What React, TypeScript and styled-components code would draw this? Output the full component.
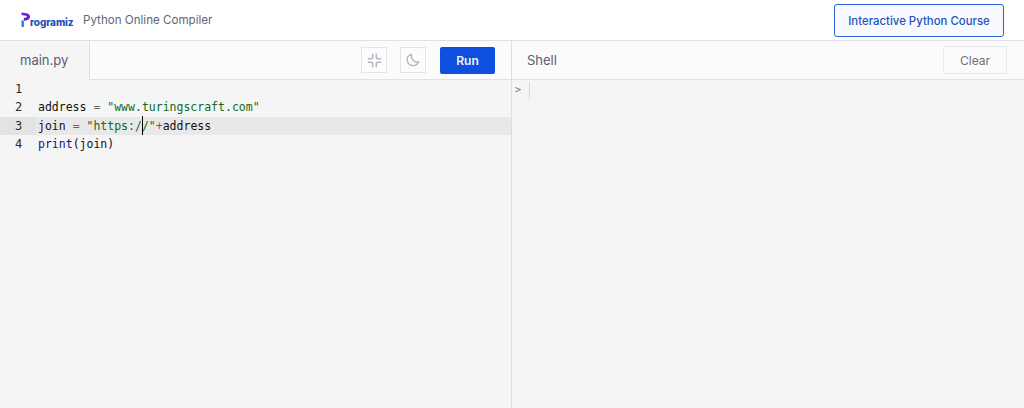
import React, { FunctionComponent } from "react";
import styled, { createGlobalStyle } from "styled-components";

/* Styles */
const GlobalStyle = createGlobalStyle`
  html, body {
    margin: 0;
    padding: 0;
    height: 100%;
    background: #ffffff;
    font-family: "Inter", "Liberation Sans", sans-serif;
  }
  * {
    box-sizing: border-box;
  }
`;

const Page = styled.div`
  width: 1024px;
  height: 408px;
  display: flex;
  flex-direction: column;
  overflow: hidden;
`;

const Header = styled.header`
  height: 41px;
  flex: none;
  display: flex;
  align-items: center;
  justify-content: space-between;
  padding: 0 20px 0 21px;
  background: #ffffff;
  border-bottom: 1px solid #dfe0e8;
`;

const Brand = styled.div`
  display: flex;
  align-items: center;
`;

const Logo = styled.div`
  display: flex;
  align-items: flex-end;
  width: 53px;
  height: 17px;
  margin: 0 9px 2px 0;
`;

const LogoText = styled.span`
  margin-left: -1px;
  font-size: 10px;
  font-weight: 800;
  line-height: 11px;
  letter-spacing: -0.1px;
  color: #2450b4;
`;

const ProductName = styled.span`
  font-size: 11.6px;
  color: #626679;
`;

const CourseButton = styled.button`
  width: 170px;
  height: 33px;
  margin-top: 1px;
  border: 1px solid #2a62d8;
  border-radius: 3px;
  background: #f8faff;
  color: #2353b8;
  font-family: inherit;
  font-size: 11.4px;
  font-weight: 500;
`;

const Panels = styled.main`
  flex: 1;
  display: flex;
  min-height: 0;
`;

const EditorPanel = styled.section`
  width: 512px;
  flex: none;
  display: flex;
  flex-direction: column;
  border-right: 1px solid #dcdce6;
`;

const ShellPanel = styled.section`
  flex: 1;
  display: flex;
  flex-direction: column;
`;

const Toolbar = styled.div`
  height: 39px;
  flex: none;
  display: flex;
  align-items: center;
  background: #fbfbfc;
  border-bottom: 1px solid #dfe0e8;
`;

const FileTab = styled.div`
  width: 90px;
  height: 39px;
  display: flex;
  align-items: center;
  padding: 0 0 1px 20px;
  background: #f5f5f5;
  border-right: 1px solid #dfe0e8;
  font-size: 13px;
  color: #5a5d70;
`;

const Actions = styled.div`
  margin-left: auto;
  display: flex;
  align-items: center;
  gap: 13px;
  padding-right: 16px;
`;

const IconButton = styled.button`
  width: 26px;
  height: 26px;
  display: flex;
  align-items: center;
  justify-content: center;
  padding: 0;
  background: #fcfcfc;
  border: 1px solid #e4e5ea;
  color: #b4b6c1;
`;

const RunButton = styled.button`
  width: 55px;
  height: 27px;
  margin-left: 1px;
  border: none;
  border-radius: 2px;
  background: #0f4fe0;
  color: #f2f5ff;
  font-family: inherit;
  font-size: 12px;
  font-weight: 600;
`;

const ShellTitle = styled.div`
  flex: 1;
  padding: 0 0 1px 15px;
  font-size: 13px;
  color: #5a5d70;
`;

const ClearButton = styled.button`
  width: 64px;
  height: 28px;
  margin-right: 17px;
  background: #fcfcfc;
  border: 1px solid #e8e9ed;
  border-radius: 2px;
  color: #6c6f80;
  font-family: inherit;
  font-size: 12px;
`;

const Code = styled.div`
  flex: 1;
  background: #f5f5f5;
  font-family: "DejaVu Sans Mono", monospace;
  font-size: 11.5px;
`;

const Line = styled.div<{ $active?: boolean }>`
  position: relative;
  display: flex;
  height: 18.3px;
  line-height: 18.3px;
  white-space: pre;
  background: ${(p) => (p.$active ? "#e8e8e8" : "transparent")};
  color: #111111;
`;

const LineNo = styled.span<{ $active?: boolean }>`
  width: 35px;
  flex: none;
  margin-right: 3px;
  padding-left: 15px;
  font-size: 12px;
  color: #2a2a2a;
  background: ${(p) => (p.$active ? "#e3e3e3" : "transparent")};
`;

const LineText = styled.span``;

const Str = styled.span`
  color: #116a1e;
`;

const Op = styled.span`
  color: #666666;
`;

const Keyword = styled.span`
  color: #12129a;
`;

const Caret = styled.span`
  position: absolute;
  left: 142px;
  top: -1px;
  width: 1px;
  height: 19px;
  background: #000000;
`;

const ShellBody = styled.div`
  flex: 1;
  display: flex;
  align-items: flex-start;
  padding: 3px 0 0 3px;
  background: #f5f5f5;
`;

const Prompt = styled.span`
  width: 14px;
  font-family: "DejaVu Sans Mono", monospace;
  font-size: 10px;
  line-height: 14px;
  color: #4f8a72;
`;

const ShellCursor = styled.span`
  width: 1px;
  height: 17px;
  margin-top: -1px;
  background: #d6d8de;
`;

const LogoMark: FunctionComponent = () => (
  <svg width="10" height="16" viewBox="0 0 10 16" style={{ flex: "none" }}>
    <path d="M0.5 0.5 L5.5 1.2 C10 2 10.4 7 6 8.2 L2.8 8.9 L2.8 6 L5 5.4 C6.2 5.1 6.2 3.9 5 3.7 L0.5 3 Z" fill="#6a1fd0" />
    <path d="M0.5 8 L2.9 9 L2.9 15 L0.5 15 Z" fill="#1f7fe0" />
  </svg>
);

const CollapseIcon: FunctionComponent = () => (
  <svg width="15" height="15" viewBox="0 0 17 17" fill="none" stroke="currentColor" strokeWidth="1.7" strokeLinecap="round">
    <path d="M6.5 1.5 V4.5 C6.5 5.6 5.6 6.5 4.5 6.5 H1.5" />
    <path d="M10.5 1.5 V4.5 C10.5 5.6 11.4 6.5 12.5 6.5 H15.5" />
    <path d="M6.5 15.5 V12.5 C6.5 11.4 5.6 10.5 4.5 10.5 H1.5" />
    <path d="M10.5 15.5 V12.5 C10.5 11.4 11.4 10.5 12.5 10.5 H15.5" />
  </svg>
);

const MoonIcon: FunctionComponent = () => (
  <svg width="14" height="14" viewBox="0 0 15 15" fill="none" stroke="currentColor" strokeWidth="1.5" strokeLinejoin="round">
    <path d="M5.8 1.4 C2.8 2.2 1 4.6 1.2 7.6 C1.5 11 4.3 13.6 7.7 13.5 C10.3 13.4 12.6 11.8 13.6 9.3 C9.4 10.6 4.8 7 5.8 1.4 Z" />
  </svg>
);

const App: FunctionComponent = () => {
  return (
    <Page>
      <GlobalStyle />
      <Header>
        <Brand>
          <Logo>
            <LogoMark />
            <LogoText>rogramiz</LogoText>
          </Logo>
          <ProductName>Python Online Compiler</ProductName>
        </Brand>
        <CourseButton>Interactive Python Course</CourseButton>
      </Header>
      <Panels>
        <EditorPanel>
          <Toolbar>
            <FileTab>main.py</FileTab>
            <Actions>
              <IconButton aria-label="Collapse">
                <CollapseIcon />
              </IconButton>
              <IconButton aria-label="Dark mode">
                <MoonIcon />
              </IconButton>
              <RunButton>Run</RunButton>
            </Actions>
          </Toolbar>
          <Code>
            <Line>
              <LineNo>1</LineNo>
            </Line>
            <Line>
              <LineNo>2</LineNo>
              <LineText>
                address <Op>=</Op> <Str>"www.turingscraft.com"</Str>
              </LineText>
            </Line>
            <Line $active>
              <LineNo $active>3</LineNo>
              <LineText>
                join <Op>=</Op> <Str>"https://"</Str>
                <Op>+</Op>address
              </LineText>
              <Caret />
            </Line>
            <Line>
              <LineNo>4</LineNo>
              <LineText>
                <Keyword>print</Keyword>(join)
              </LineText>
            </Line>
          </Code>
        </EditorPanel>
        <ShellPanel>
          <Toolbar>
            <ShellTitle>Shell</ShellTitle>
            <ClearButton>Clear</ClearButton>
          </Toolbar>
          <ShellBody>
            <Prompt>&gt;</Prompt>
            <ShellCursor />
          </ShellBody>
        </ShellPanel>
      </Panels>
    </Page>
  );
};

export default App;
